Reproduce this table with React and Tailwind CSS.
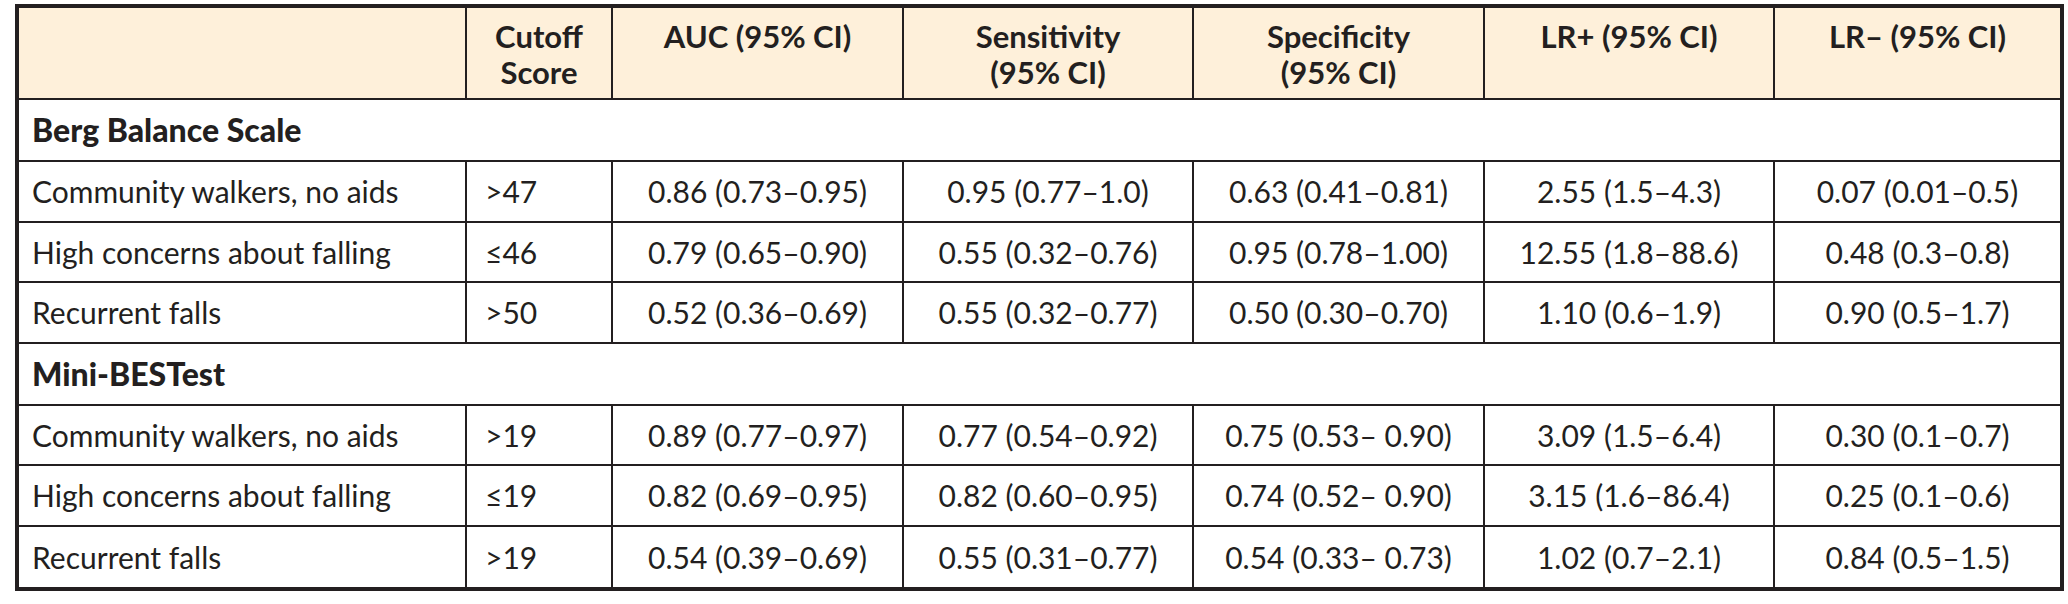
import React from 'react'

const cols = 'grid grid-cols-[448px_146px_291px_290px_291px_290px_1fr]'

const headers = [
    '',
    ['Cutoff', 'Score'],
    ['AUC (95% CI)'],
    ['Sensitivity', '(95% CI)'],
    ['Specificity', '(95% CI)'],
    ['LR+ (95% CI)'],
    ['LR\u2013 (95% CI)'],
]

const sections = [
    {
        title: 'Berg Balance Scale',
        rows: [
            ['Community walkers, no aids', '>47', '0.86 (0.73\u20130.95)', '0.95 (0.77\u20131.0)', '0.63 (0.41\u20130.81)', '2.55 (1.5\u20134.3)', '0.07 (0.01\u20130.5)'],
            ['High concerns about falling', '\u226446', '0.79 (0.65\u20130.90)', '0.55 (0.32\u20130.76)', '0.95 (0.78\u20131.00)', '12.55 (1.8\u201388.6)', '0.48 (0.3\u20130.8)'],
            ['Recurrent falls', '>50', '0.52 (0.36\u20130.69)', '0.55 (0.32\u20130.77)', '0.50 (0.30\u20130.70)', '1.10 (0.6\u20131.9)', '0.90 (0.5\u20131.7)'],
        ],
    },
    {
        title: 'Mini-BESTest',
        rows: [
            ['Community walkers, no aids', '>19', '0.89 (0.77\u20130.97)', '0.77 (0.54\u20130.92)', '0.75 (0.53\u2013 0.90)', '3.09 (1.5\u20136.4)', '0.30 (0.1\u20130.7)'],
            ['High concerns about falling', '\u226419', '0.82 (0.69\u20130.95)', '0.82 (0.60\u20130.95)', '0.74 (0.52\u2013 0.90)', '3.15 (1.6\u201386.4)', '0.25 (0.1\u20130.6)'],
            ['Recurrent falls', '>19', '0.54 (0.39\u20130.69)', '0.55 (0.31\u20130.77)', '0.54 (0.33\u2013 0.73)', '1.02 (0.7\u20132.1)', '0.84 (0.5\u20131.5)'],
        ],
    },
]

const Row = ({ cells, last }) => (
    <div className={`${cols} h-[60.5px] ${last ? '' : 'border-b-2 border-[#231f20]'}`}>
        {cells.map((c, i) => (
            <div
                key={i}
                className={`flex items-center ${i === 6 ? '' : 'border-r-2 border-[#231f20]'} ${i === 0 ? 'pl-[13px]' : i === 1 ? 'pl-[18px]' : 'justify-center'}`}
            >
                {c}
            </div>
        ))}
    </div>
)

export default function App() {
    return (
        <div className="bg-white w-[2068px] h-[604px] pl-[15px] pt-[4px] text-[#231f20]" style={{ fontFamily: 'Lato, "Open Sans", sans-serif' }}>
            <div className="w-[2049px] border-4 border-[#231f20] text-[30px] leading-none">
                <div className={`${cols} h-[92px] bg-[#fef0da] border-b-2 border-[#231f20] font-bold text-[31px]`}>
                    {headers.map((h, i) => (
                        <div key={i} className={`flex flex-col items-center pt-[10px] leading-[36px] ${i === 6 ? '' : 'border-r-2 border-[#231f20]'}`}>
                            {h && h.map((line) => <span key={line}>{line}</span>)}
                        </div>
                    ))}
                </div>

                {sections.map((s, si) => (
                    <div key={s.title}>
                        <div className="h-[62px] flex items-center pl-[13px] font-black text-[32px] border-b-2 border-[#231f20]">
                            {s.title}
                        </div>
                        {s.rows.map((r, ri) => (
                            <Row key={ri} cells={r} last={si === 1 && ri === 2} />
                        ))}
                    </div>
                ))}
            </div>
        </div>
    )
}
